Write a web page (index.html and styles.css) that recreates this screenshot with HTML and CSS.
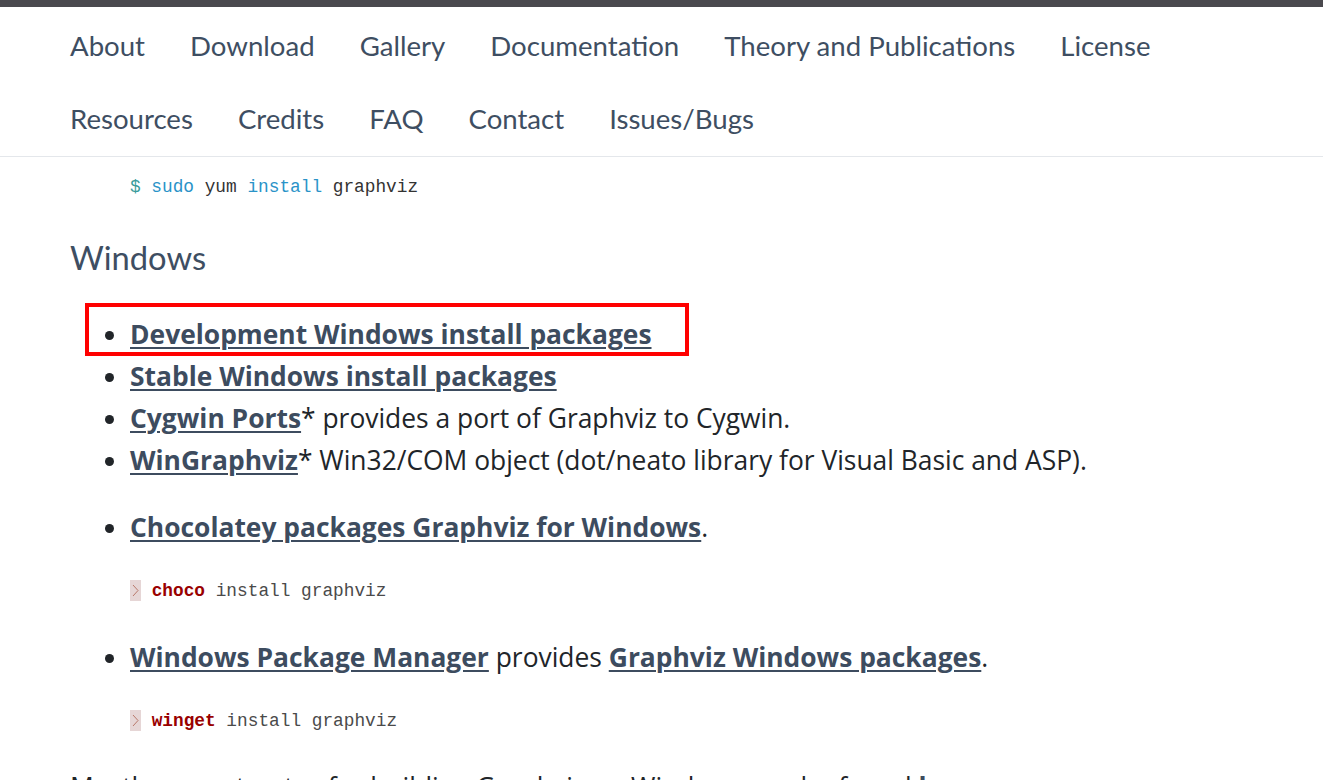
FILE: index.html
```html
<!DOCTYPE html>
<html lang="en">
<head>
<meta charset="utf-8">
<title>Download | Graphviz</title>
<link rel="stylesheet" href="styles.css">
</head>
<body>
<div class="topbar"></div>
<nav class="nav">
  <div class="nav-row">
    <a href="#">About</a>
    <a href="#">Download</a>
    <a href="#">Gallery</a>
    <a href="#">Documentation</a>
    <a href="#">Theory and Publications</a>
    <a href="#">License</a>
  </div>
  <div class="nav-row">
    <a href="#">Resources</a>
    <a href="#">Credits</a>
    <a href="#">FAQ</a>
    <a href="#">Contact</a>
    <a href="#">Issues/Bugs</a>
  </div>
</nav>
<main class="content">
  <pre class="code first"><span class="c-prompt">$</span> <span class="c-kw">sudo</span> yum <span class="c-kw">install</span> graphviz</pre>
  <h2 class="heading">Windows</h2>
  <ul class="list">
    <li class="marked"><a href="#">Development Windows install packages</a></li>
    <li><a href="#">Stable Windows install packages</a></li>
    <li><a href="#">Cygwin Ports</a>* provides a port of Graphviz to Cygwin.</li>
    <li><a href="#">WinGraphviz</a>* Win32/COM object (dot/neato library for Visual Basic and ASP).</li>
  </ul>
  <ul class="list second">
    <li><a href="#">Chocolatey packages Graphviz for Windows</a>.
      <pre class="code ps"><span class="ps-prompt"><svg width="11" height="21" viewBox="0 0 11 21"><path d="M3 5 L8 10.5 L3 16" fill="none" stroke="#b9786a" stroke-width="1"/></svg></span> <span class="c-cmd">choco</span> install graphviz</pre>
    </li>
    <li class="wpm"><a href="#">Windows Package Manager</a> provides <a href="#">Graphviz Windows packages</a>.
      <pre class="code ps"><span class="ps-prompt"><svg width="11" height="21" viewBox="0 0 11 21"><path d="M3 5 L8 10.5 L3 16" fill="none" stroke="#b9786a" stroke-width="1"/></svg></span> <span class="c-cmd">winget</span> install graphviz</pre>
    </li>
  </ul>
  <p class="para">Mostly correct notes for building Graphviz on Windows can be found <a href="#">here</a>.</p>
</main>
<div class="highlight-box"></div>
</body>
</html>
```

FILE: styles.css
```css
html, body {
  margin: 0;
  padding: 0;
  background: #ffffff;
}

body {
  font-family: "Open Sans", "Liberation Sans", sans-serif;
  color: #212529;
  overflow: hidden;
  height: 780px;
  position: relative;
}

.topbar {
  height: 7px;
  background: #4a494e;
}

.nav {
  padding: 2px 0 0 70px;
  border-bottom: 1px solid #e4e7eb;
  height: 147px;
}

.nav-row {
  display: flex;
  gap: 45px;
  height: 73px;
  align-items: center;
}

.nav-row a {
  font-family: "Lato", "Open Sans", sans-serif;
  font-size: 27.6px;
  color: #3e4e62;
  text-decoration: none;
}

.content {
  padding-left: 70px;
}

.code {
  margin: 0;
  font-family: "Liberation Mono", "DejaVu Sans Mono", monospace;
  font-size: 17.8px;
  line-height: 24px;
  color: #333333;
}

.code.first {
  margin-top: 18px;
  padding-left: 60px;
}

.c-prompt {
  color: #3a9c9c;
}

.c-kw {
  color: #2a93c8;
}

.heading {
  margin: 39px 0 0 0;
  font-family: "Lato", "Open Sans", sans-serif;
  font-weight: 400;
  font-size: 32.7px;
  line-height: 40px;
  color: #3e4e62;
}

.list {
  margin: 35px 0 0 0;
  padding-left: 60px;
  font-size: 26.4px;
  line-height: 42px;
}

.list.second {
  margin-top: 25px;
}

.list a {
  color: #3d4c5f;
  font-weight: 700;
  text-decoration: underline;
  text-decoration-thickness: 2px;
  text-underline-offset: 3px;
}

.list .wpm {
  margin-top: 33px;
}

.code.ps {
  margin: 31px 0 0 0;
  color: #4a4a4a;
}

.ps-prompt {
  display: inline-block;
  width: 11px;
  height: 21px;
  background: #e6d6d6;
  vertical-align: -5px;
}

.ps-prompt svg {
  display: block;
}

.c-cmd {
  color: #990000;
  font-weight: 700;
}

.para {
  margin: 33px 0 0 0;
  font-size: 26.4px;
  line-height: 42px;
  color: #212529;
}

.para a {
  color: #3d4c5f;
  font-weight: 700;
}

.highlight-box {
  position: absolute;
  left: 85px;
  top: 303px;
  width: 596px;
  height: 45px;
  border: 4px solid #ff0000;
  pointer-events: none;
}
```
